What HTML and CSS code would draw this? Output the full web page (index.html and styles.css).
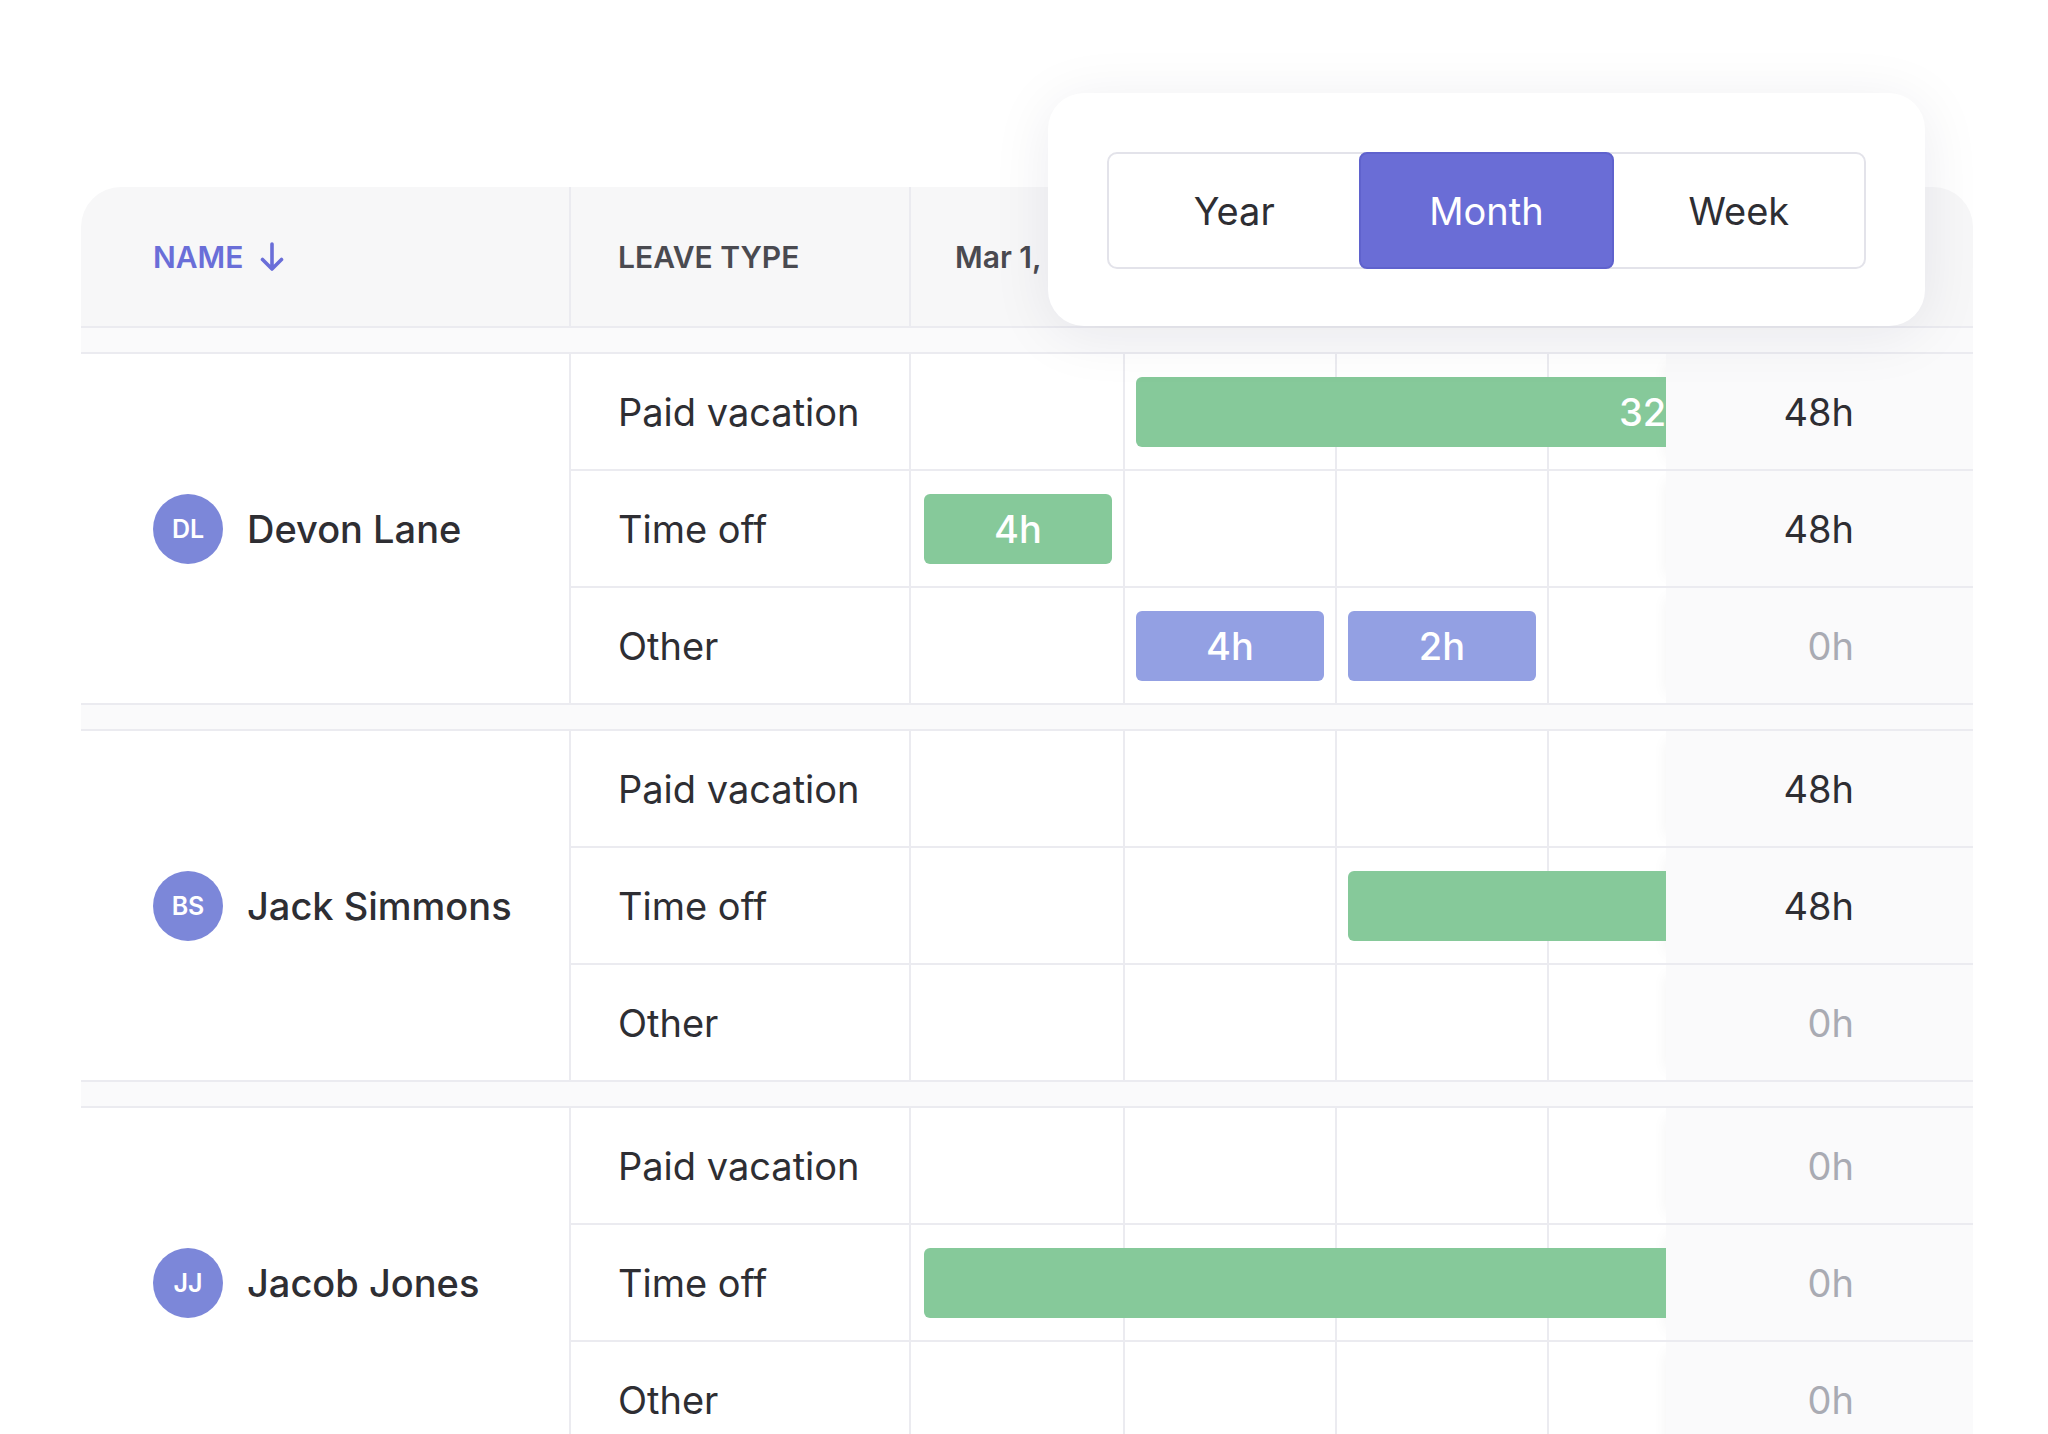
FILE: index.html
```html
<!DOCTYPE html>
<html lang="en">
<head>
    <meta charset="UTF-8">
    <meta name="viewport" content="width=device-width, initial-scale=1.0">
    <title>Leave planner</title>
    <link rel="stylesheet" href="styles.css">
</head>
<body>
    <div class="board">
        <div class="table">
            <div class="thead">
                <div class="th th-name">
                    NAME
                    <svg class="sort-icon" width="26" height="30" viewBox="0 0 26 30">
                        <path d="M13 2 V27 M3.5 17.5 L13 27 L22.5 17.5" fill="none" stroke="currentColor" stroke-width="3.6" stroke-linecap="round" stroke-linejoin="round"/>
                    </svg>
                </div>
                <div class="th th-type">LEAVE TYPE</div>
                <div class="days th-days">
                    <div class="day th-day">Mar 1, 2022</div>
                    <div class="day th-day">Mar 2, 2022</div>
                    <div class="day th-day">Mar 3, 2022</div>
                    <div class="day th-day">Mar 4, 2022</div>
                </div>
                <div class="th th-total">TOTAL</div>
            </div>

            <div class="gap"></div>
            <div class="group">
                <div class="person"><span class="avatar">DL</span>Devon Lane</div>
                <div class="rows">
                    <div class="row">
                        <div class="type">Paid vacation</div>
                        <div class="days">
                            <span class="day"></span><span class="day"></span><span class="day"></span><span class="day"></span>
                            <span class="bar green" style="grid-column: 2 / span 5">32h</span>
                        </div>
                        <div class="total">48h</div>
                    </div>
                    <div class="row">
                        <div class="type">Time off</div>
                        <div class="days">
                            <span class="day"></span><span class="day"></span><span class="day"></span><span class="day"></span>
                            <span class="bar green" style="grid-column: 1 / span 1">4h</span>
                        </div>
                        <div class="total">48h</div>
                    </div>
                    <div class="row">
                        <div class="type">Other</div>
                        <div class="days">
                            <span class="day"></span><span class="day"></span><span class="day"></span><span class="day"></span>
                            <span class="bar violet" style="grid-column: 2 / span 1">4h</span>
                            <span class="bar violet" style="grid-column: 3 / span 1">2h</span>
                        </div>
                        <div class="total empty">0h</div>
                    </div>
                </div>
            </div>

            <div class="gap"></div>
            <div class="group">
                <div class="person"><span class="avatar">BS</span>Jack Simmons</div>
                <div class="rows">
                    <div class="row">
                        <div class="type">Paid vacation</div>
                        <div class="days">
                            <span class="day"></span><span class="day"></span><span class="day"></span><span class="day"></span>
                        </div>
                        <div class="total">48h</div>
                    </div>
                    <div class="row">
                        <div class="type">Time off</div>
                        <div class="days">
                            <span class="day"></span><span class="day"></span><span class="day"></span><span class="day"></span>
                            <span class="bar green" style="grid-column: 3 / span 4"></span>
                        </div>
                        <div class="total">48h</div>
                    </div>
                    <div class="row">
                        <div class="type">Other</div>
                        <div class="days">
                            <span class="day"></span><span class="day"></span><span class="day"></span><span class="day"></span>
                        </div>
                        <div class="total empty">0h</div>
                    </div>
                </div>
            </div>

            <div class="gap"></div>
            <div class="group">
                <div class="person"><span class="avatar">JJ</span>Jacob Jones</div>
                <div class="rows">
                    <div class="row">
                        <div class="type">Paid vacation</div>
                        <div class="days">
                            <span class="day"></span><span class="day"></span><span class="day"></span><span class="day"></span>
                        </div>
                        <div class="total empty">0h</div>
                    </div>
                    <div class="row">
                        <div class="type">Time off</div>
                        <div class="days">
                            <span class="day"></span><span class="day"></span><span class="day"></span><span class="day"></span>
                            <span class="bar green" style="grid-column: 1 / span 8"></span>
                        </div>
                        <div class="total empty">0h</div>
                    </div>
                    <div class="row">
                        <div class="type">Other</div>
                        <div class="days">
                            <span class="day"></span><span class="day"></span><span class="day"></span><span class="day"></span>
                        </div>
                        <div class="total empty">0h</div>
                    </div>
                </div>
            </div>
        </div>

        <!-- range picker floating over the header -->
        <div class="range-card">
            <div class="segmented">
                <button class="segment">Year</button>
                <button class="segment active">Month</button>
                <button class="segment">Week</button>
            </div>
        </div>
    </div>
</body>
</html>
```

FILE: styles.css
```css
html, body {
    margin: 0;
    padding: 0;
    overflow: hidden;
}
body {
    background-color: #ffffff;
    font-family: Inter, "Noto Sans", sans-serif;
    color: #2e2e33;
}
.board {
    position: relative;
    width: 1892px;
    margin: 187px 0 0 81px;
}

/* header */
.thead {
    display: grid;
    grid-template-columns: 490px 340px 755px 307px;
    height: 139px;
    background-color: #f7f7f8;
    border-radius: 40px 40px 0 0;
}
.th {
    display: flex;
    align-items: center;
    font-size: 30px;
    font-weight: 600;
    color: #4a4a50;
}
.th-name {
    padding-left: 72px;
    color: #6a6ed8;
    border-right: 2px solid #ebebf0;
}
.sort-icon {
    margin-left: 16px;
}
.th-type {
    padding-left: 47px;
    border-right: 2px solid #ebebf0;
}
.th-day {
    display: flex;
    align-items: center;
    padding-left: 44px;
    font-size: 30px;
    font-weight: 600;
    color: #4a4a50;
    white-space: nowrap;
}
.th-total {
    justify-content: flex-end;
    padding-right: 119px;
}

/* spacer between people */
.gap {
    height: 24px;
    background-color: #fafafb;
    border-top: 2px solid #ebebf0;
    border-bottom: 2px solid #ebebf0;
}

.group {
    display: flex;
}
.person {
    box-sizing: border-box;
    width: 490px;
    flex-shrink: 0;
    display: flex;
    align-items: center;
    padding-left: 72px;
    border-right: 2px solid #ebebf0;
    font-size: 38px;
    font-weight: 500;
}
.avatar {
    display: flex;
    align-items: center;
    justify-content: center;
    width: 70px;
    height: 70px;
    margin-right: 24px;
    border-radius: 50%;
    background-color: #7c87d9;
    color: #ffffff;
    font-size: 25px;
    font-weight: 600;
}
.rows {
    flex: 1;
}
.row {
    display: grid;
    grid-template-columns: 340px 755px 307px;
    height: 115px;
}
.row + .row {
    border-top: 2px solid #ebebf0;
}
.type {
    display: flex;
    align-items: center;
    padding-left: 47px;
    border-right: 2px solid #ebebf0;
    font-size: 38px;
}

/* timeline: one grid track per day, bars span tracks */
.days {
    display: grid;
    grid-template-columns: repeat(4, 212px);
    grid-auto-columns: 212px;
    grid-template-rows: 100%;
    overflow: hidden;
}
.day {
    grid-row: 1;
    box-sizing: border-box;
}
.day:nth-child(1) { grid-column: 1; }
.day:nth-child(2) { grid-column: 2; }
.day:nth-child(3) { grid-column: 3; }
.day:nth-child(4) { grid-column: 4; }
.day + .day {
    border-left: 2px solid #ebebf0;
}
.bar {
    grid-row: 1;
    align-self: center;
    z-index: 1;
    display: flex;
    align-items: center;
    justify-content: center;
    height: 70px;
    margin: 0 11px 0 13px;
    border-radius: 6px;
    color: #ffffff;
    font-size: 38px;
    font-weight: 500;
}
.bar.green {
    background-color: #86c99a;
}
.bar.violet {
    background-color: #93a0e3;
}

.total {
    display: flex;
    align-items: center;
    justify-content: flex-end;
    padding-right: 119px;
    background-color: #fafafb;
    box-shadow: -10px 0 14px -10px rgba(0, 0, 0, 0.05);
    font-size: 38px;
    font-weight: 400;
}
.total.empty {
    color: #a9abb3;
}

/* range picker */
.range-card {
    position: absolute;
    top: -94px;
    left: 967px;
    box-sizing: border-box;
    width: 877px;
    height: 233px;
    padding: 59px;
    background-color: #ffffff;
    border-radius: 36px;
    box-shadow: 0 8px 60px rgba(30, 30, 60, 0.08);
    z-index: 5;
}
.segmented {
    display: flex;
    height: 117px;
    box-sizing: border-box;
    border: 2px solid #e3e3ea;
    border-radius: 10px;
}
.segment {
    flex: 1;
    border: none;
    background: none;
    font-family: Inter, "Noto Sans", sans-serif;
    font-size: 38px;
    color: #2e2e33;
    cursor: pointer;
}
.segment.active {
    margin: -2px 0;
    border: 2px solid #5f62cd;
    border-radius: 8px;
    background-color: #6a6dd6;
    color: #ffffff;
}
```
